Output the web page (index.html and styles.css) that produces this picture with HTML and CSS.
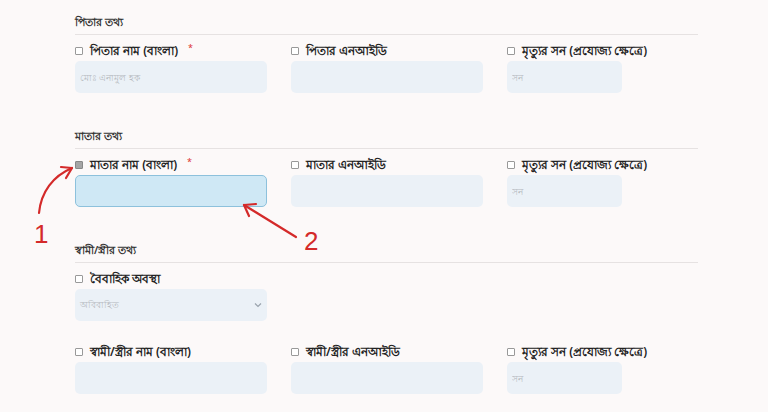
FILE: index.html
```html
<!DOCTYPE html>
<html lang="bn">
<head>
  <meta charset="UTF-8">
  <meta name="viewport" content="width=device-width, initial-scale=1.0">
  <title>তথ্য ফর্ম</title>
  <link rel="stylesheet" href="styles.css">
</head>
<body>
  <div class="page">
    <section class="section">
      <h3 class="section-title">পিতার তথ্য</h3>
      <div class="row">
        <div class="field">
          <label class="label"><span class="box"></span>পিতার নাম (বাংলা) <span class="req">*</span></label>
          <input class="input" type="text" placeholder="মোঃ এনামুল হক">
        </div>
        <div class="field">
          <label class="label"><span class="box"></span>পিতার এনআইডি</label>
          <input class="input" type="text">
        </div>
        <div class="field">
          <label class="label"><span class="box"></span>মৃত্যুর সন (প্রযোজ্য ক্ষেত্রে)</label>
          <input class="input" type="text" placeholder="সন">
        </div>
      </div>
    </section>

    <section class="section">
      <h3 class="section-title">মাতার তথ্য</h3>
      <div class="row">
        <div class="field">
          <label class="label"><span class="box checked"></span>মাতার নাম (বাংলা) <span class="req">*</span></label>
          <input class="input focus" type="text">
        </div>
        <div class="field">
          <label class="label"><span class="box"></span>মাতার এনআইডি</label>
          <input class="input" type="text">
        </div>
        <div class="field">
          <label class="label"><span class="box"></span>মৃত্যুর সন (প্রযোজ্য ক্ষেত্রে)</label>
          <input class="input" type="text" placeholder="সন">
        </div>
      </div>
    </section>

    <section class="section">
      <h3 class="section-title">স্বামী/স্ত্রীর তথ্য</h3>
      <div class="row">
        <div class="field">
          <label class="label"><span class="box"></span>বৈবাহিক অবস্থা</label>
          <div class="select">অবিবাহিত
            <svg width="8" height="6" viewBox="0 0 8 6"><path d="M1 1.5l3 3 3-3" fill="none" stroke="#9aa3ad" stroke-width="1.2"/></svg>
          </div>
        </div>
      </div>
      <div class="row spaced">
        <div class="field">
          <label class="label"><span class="box"></span>স্বামী/স্ত্রীর নাম (বাংলা)</label>
          <input class="input" type="text">
        </div>
        <div class="field">
          <label class="label"><span class="box"></span>স্বামী/স্ত্রীর এনআইডি</label>
          <input class="input" type="text">
        </div>
        <div class="field">
          <label class="label"><span class="box"></span>মৃত্যুর সন (প্রযোজ্য ক্ষেত্রে)</label>
          <input class="input" type="text" placeholder="সন">
        </div>
      </div>
    </section>
  </div>

  <svg class="marks" width="768" height="412" viewBox="0 0 768 412">
    <g fill="none" stroke="#d42a2a" stroke-width="2.2" stroke-linecap="round" stroke-linejoin="round">
      <path d="M39 213 C41 192 53 176 72 168"/>
      <path d="M61 167 L72 168 L66 178"/>
      <path d="M296 237 L244 205"/>
      <path d="M256 204 L244 205 L249 216"/>
    </g>
    <text x="34" y="243" class="num">1</text>
    <text x="304" y="250" class="num">2</text>
  </svg>
</body>
</html>
```

FILE: styles.css
```css
body {
  margin: 0;
  background: #fcf9f9;
  font-family: "Noto Sans", "Liberation Sans", sans-serif;
  color: #222;
}
.page {
  width: 623px;
  margin-left: 75px;
  padding-top: 15px;
}
.section {
  margin-bottom: 36px;
}
.section-title {
  margin: 0;
  padding-bottom: 5px;
  font-size: 10.5px;
  line-height: 14px;
  font-weight: 600;
  color: #333;
  border-bottom: 1px solid #e6e2e2;
}
.row {
  display: grid;
  grid-template-columns: 192px 192px 115px;
  column-gap: 24px;
  margin-top: 8px;
}
.row.spaced {
  margin-top: 23px;
}
.field {
  display: flex;
  flex-direction: column;
  gap: 3px;
}
.label {
  display: flex;
  align-items: center;
  gap: 7px;
  font-size: 12px;
  line-height: 15px;
  font-weight: 600;
  white-space: nowrap;
  height: 15px;
}
.box {
  width: 6px;
  height: 6px;
  border: 1px solid #999;
  border-radius: 1px;
  background: #fff;
  flex: none;
}
.box.checked {
  background: #a5a5a5;
  border-color: #888;
}
.req {
  color: #d33;
  margin-left: 3px;
  font-size: 9px;
  line-height: 9px;
  font-weight: 400;
  align-self: flex-start;
}
.input, .select {
  box-sizing: border-box;
  height: 32px;
  width: 100%;
  border: 1px solid transparent;
  border-radius: 5px;
  background: #ebf1f7;
  padding: 0 4px;
  font-family: inherit;
  font-size: 9px;
  color: #aaa;
}
.input::placeholder {
  color: #b5b9be;
}
.input.focus {
  background: #cfe8f5;
  border-color: #8dc1dc;
}
.select {
  display: flex;
  align-items: center;
  justify-content: space-between;
  color: #b5b9be;
}
.marks {
  position: absolute;
  left: 0;
  top: 0;
  pointer-events: none;
}
.num {
  fill: #d42a2a;
  font-family: "Liberation Sans", sans-serif;
  font-size: 26px;
}
```
